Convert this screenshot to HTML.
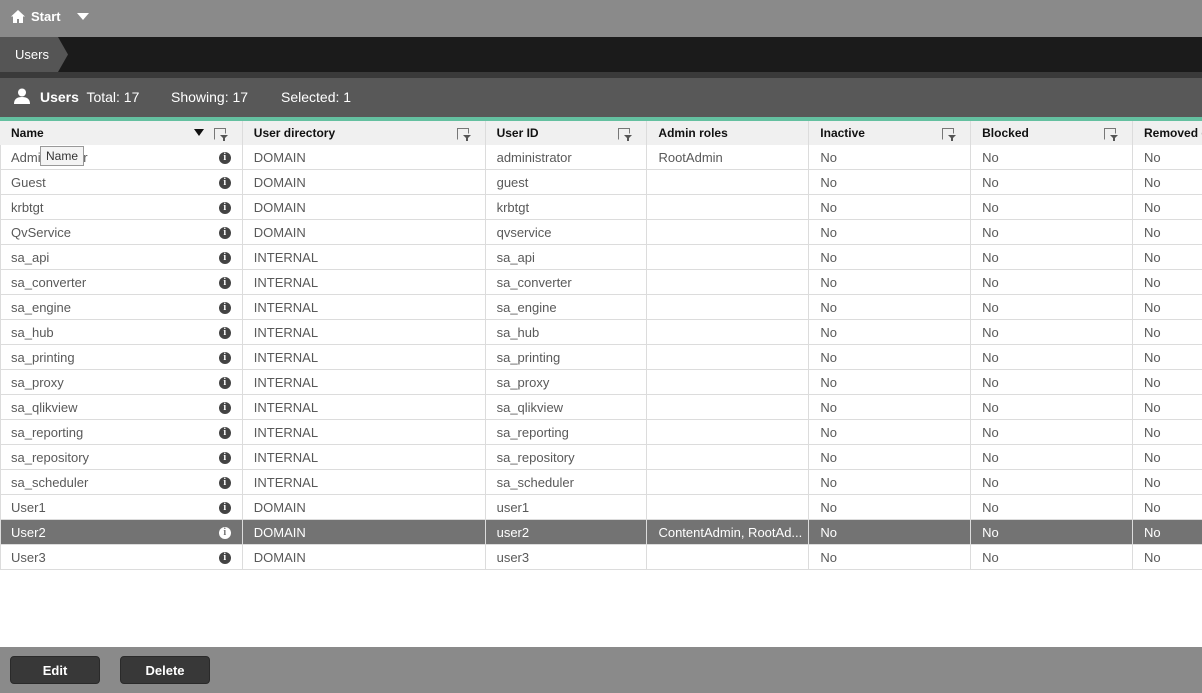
<!DOCTYPE html><html><head><style>
*{box-sizing:border-box;margin:0;padding:0}
body{width:1202px;height:693px;overflow:hidden;background:#fff;font-family:"Liberation Sans",sans-serif;font-size:13px;position:relative}
.top{position:absolute;left:0;top:0;width:1202px;height:37px;background:#8a8a8a;color:#fff}
.crumb{position:absolute;left:0;top:37px;width:1202px;height:35px;background:#1b1b1b}
.gap{position:absolute;left:0;top:72px;width:1202px;height:6px;background:#3a3a3a}
.hdr{position:absolute;left:0;top:78px;width:1202px;height:39px;background:#585858;color:#fff;font-size:14px}
.teal{position:absolute;left:0;top:117px;width:1202px;height:4px;background:#64c0a0}
.row{position:absolute;left:0;width:1202px;height:25px;display:flex;border-bottom:1px solid #dcdcdc;color:#595959}
.row>div{border-right:1px solid #dcdcdc;height:24px;line-height:26px;padding-left:11px;position:relative;white-space:nowrap;overflow:hidden}
.th{background:#f0f0f0;color:#111;font-weight:bold;font-size:12px;border-bottom:none}
.th>div{line-height:25px}
.sel{background:#737373;color:#fff}
.c1{width:243px}.c2{width:243px}.c3{width:162px}.c4{width:162px}.c5{width:162px}.c6{width:162px}.c7{width:69px;border-right:none!important}
.i{position:absolute;right:11px;top:7px;width:12px;height:12px;border-radius:50%;background:#444;color:#fff;font-size:10px;font-weight:bold;line-height:12px;text-align:center;font-family:"Liberation Serif",serif}
.sel .i{background:#fff;color:#737373}
.f{position:absolute;right:13px;top:6px}
.bot{position:absolute;left:0;top:647px;width:1202px;height:46px;background:#8a8a8a}
.btn{position:absolute;top:9px;width:90px;height:28px;background:#383838;border:1px solid #2a2a2a;border-radius:4px;color:#fff;font-weight:bold;text-align:center;line-height:27px;font-size:13px}
</style></head><body>
<div class="top">
<svg style="position:absolute;left:11px;top:10px" width="14" height="13" viewBox="0 0 14 13"><path d="M7 0L0 6.5h2V13h4V9h2v4h4V6.5h2z" fill="#fff"/></svg>
<span style="position:absolute;left:31px;top:9px;font-weight:bold;font-size:13px">Start</span>
<svg style="position:absolute;left:77px;top:13px" width="12" height="8"><path d="M0 0h12L6 7z" fill="#fff"/></svg>
</div>
<div class="crumb"><svg style="position:absolute;left:0;top:0" width="70" height="35"><path d="M0 0H58L68 17.5 58 35H0z" fill="#555"/></svg><span style="position:absolute;left:15px;top:10px;color:#fff;font-size:13px">Users</span></div>
<div class="gap"></div>
<div class="hdr">
<svg style="position:absolute;left:14px;top:10px" width="16" height="16" viewBox="0 0 16 16"><circle cx="8" cy="4.5" r="4" fill="#fff"/><path d="M0 16c0-5 3-7 8-7s8 2 8 7z" fill="#fff"/></svg>
<span style="position:absolute;left:40px;top:11px"><b>Users</b>&nbsp; Total:&nbsp;17</span>
<span style="position:absolute;left:171px;top:11px">Showing:&nbsp;17</span>
<span style="position:absolute;left:281px;top:11px">Selected:&nbsp;1</span>
</div>
<div class="teal"></div>
<div class="row th" style="top:121px;height:24px">
<div class="c1">Name<svg style="position:absolute;left:194px;top:8px" width="10" height="8"><path d="M0 0h10L5 7z" fill="#111"/></svg><svg class="f" width="16" height="14"><path d="M1.5 12.5V1.5h11v5" stroke="#777" fill="none"/><path d="M7 8h8l-3 3v3h-2v-3z" fill="#555"/></svg></div>
<div class="c2">User directory<svg class="f" width="16" height="14"><path d="M1.5 12.5V1.5h11v5" stroke="#777" fill="none"/><path d="M7 8h8l-3 3v3h-2v-3z" fill="#555"/></svg></div>
<div class="c3">User ID<svg class="f" width="16" height="14"><path d="M1.5 12.5V1.5h11v5" stroke="#777" fill="none"/><path d="M7 8h8l-3 3v3h-2v-3z" fill="#555"/></svg></div>
<div class="c4">Admin roles</div>
<div class="c5">Inactive<svg class="f" width="16" height="14"><path d="M1.5 12.5V1.5h11v5" stroke="#777" fill="none"/><path d="M7 8h8l-3 3v3h-2v-3z" fill="#555"/></svg></div>
<div class="c6">Blocked<svg class="f" width="16" height="14"><path d="M1.5 12.5V1.5h11v5" stroke="#777" fill="none"/><path d="M7 8h8l-3 3v3h-2v-3z" fill="#555"/></svg></div>
<div class="c7" style="overflow:visible">Removed e</div>
</div>
<div class="row" style="top:145px"><div class="c1">Administrator<span class="i">i</span></div><div class="c2">DOMAIN</div><div class="c3">administrator</div><div class="c4">RootAdmin</div><div class="c5">No</div><div class="c6">No</div><div class="c7">No</div></div>
<div class="row" style="top:170px"><div class="c1">Guest<span class="i">i</span></div><div class="c2">DOMAIN</div><div class="c3">guest</div><div class="c4"></div><div class="c5">No</div><div class="c6">No</div><div class="c7">No</div></div>
<div class="row" style="top:195px"><div class="c1">krbtgt<span class="i">i</span></div><div class="c2">DOMAIN</div><div class="c3">krbtgt</div><div class="c4"></div><div class="c5">No</div><div class="c6">No</div><div class="c7">No</div></div>
<div class="row" style="top:220px"><div class="c1">QvService<span class="i">i</span></div><div class="c2">DOMAIN</div><div class="c3">qvservice</div><div class="c4"></div><div class="c5">No</div><div class="c6">No</div><div class="c7">No</div></div>
<div class="row" style="top:245px"><div class="c1">sa_api<span class="i">i</span></div><div class="c2">INTERNAL</div><div class="c3">sa_api</div><div class="c4"></div><div class="c5">No</div><div class="c6">No</div><div class="c7">No</div></div>
<div class="row" style="top:270px"><div class="c1">sa_converter<span class="i">i</span></div><div class="c2">INTERNAL</div><div class="c3">sa_converter</div><div class="c4"></div><div class="c5">No</div><div class="c6">No</div><div class="c7">No</div></div>
<div class="row" style="top:295px"><div class="c1">sa_engine<span class="i">i</span></div><div class="c2">INTERNAL</div><div class="c3">sa_engine</div><div class="c4"></div><div class="c5">No</div><div class="c6">No</div><div class="c7">No</div></div>
<div class="row" style="top:320px"><div class="c1">sa_hub<span class="i">i</span></div><div class="c2">INTERNAL</div><div class="c3">sa_hub</div><div class="c4"></div><div class="c5">No</div><div class="c6">No</div><div class="c7">No</div></div>
<div class="row" style="top:345px"><div class="c1">sa_printing<span class="i">i</span></div><div class="c2">INTERNAL</div><div class="c3">sa_printing</div><div class="c4"></div><div class="c5">No</div><div class="c6">No</div><div class="c7">No</div></div>
<div class="row" style="top:370px"><div class="c1">sa_proxy<span class="i">i</span></div><div class="c2">INTERNAL</div><div class="c3">sa_proxy</div><div class="c4"></div><div class="c5">No</div><div class="c6">No</div><div class="c7">No</div></div>
<div class="row" style="top:395px"><div class="c1">sa_qlikview<span class="i">i</span></div><div class="c2">INTERNAL</div><div class="c3">sa_qlikview</div><div class="c4"></div><div class="c5">No</div><div class="c6">No</div><div class="c7">No</div></div>
<div class="row" style="top:420px"><div class="c1">sa_reporting<span class="i">i</span></div><div class="c2">INTERNAL</div><div class="c3">sa_reporting</div><div class="c4"></div><div class="c5">No</div><div class="c6">No</div><div class="c7">No</div></div>
<div class="row" style="top:445px"><div class="c1">sa_repository<span class="i">i</span></div><div class="c2">INTERNAL</div><div class="c3">sa_repository</div><div class="c4"></div><div class="c5">No</div><div class="c6">No</div><div class="c7">No</div></div>
<div class="row" style="top:470px"><div class="c1">sa_scheduler<span class="i">i</span></div><div class="c2">INTERNAL</div><div class="c3">sa_scheduler</div><div class="c4"></div><div class="c5">No</div><div class="c6">No</div><div class="c7">No</div></div>
<div class="row" style="top:495px"><div class="c1">User1<span class="i">i</span></div><div class="c2">DOMAIN</div><div class="c3">user1</div><div class="c4"></div><div class="c5">No</div><div class="c6">No</div><div class="c7">No</div></div>
<div class="row sel" style="top:520px"><div class="c1">User2<span class="i">i</span></div><div class="c2">DOMAIN</div><div class="c3">user2</div><div class="c4">ContentAdmin, RootAd...</div><div class="c5">No</div><div class="c6">No</div><div class="c7">No</div></div>
<div class="row" style="top:545px"><div class="c1">User3<span class="i">i</span></div><div class="c2">DOMAIN</div><div class="c3">user3</div><div class="c4"></div><div class="c5">No</div><div class="c6">No</div><div class="c7">No</div></div>
<div style="position:absolute;left:0;top:145px;width:1px;height:425px;background:#dcdcdc"></div>
<div style="position:absolute;left:40px;top:146px;height:20px;padding:0 5px;background:#f4f4f4;border:1px solid #999;color:#333;font-size:12px;line-height:18px">Name</div>
<div class="bot"><div class="btn" style="left:10px">Edit</div><div class="btn" style="left:120px">Delete</div></div>
</body></html>
